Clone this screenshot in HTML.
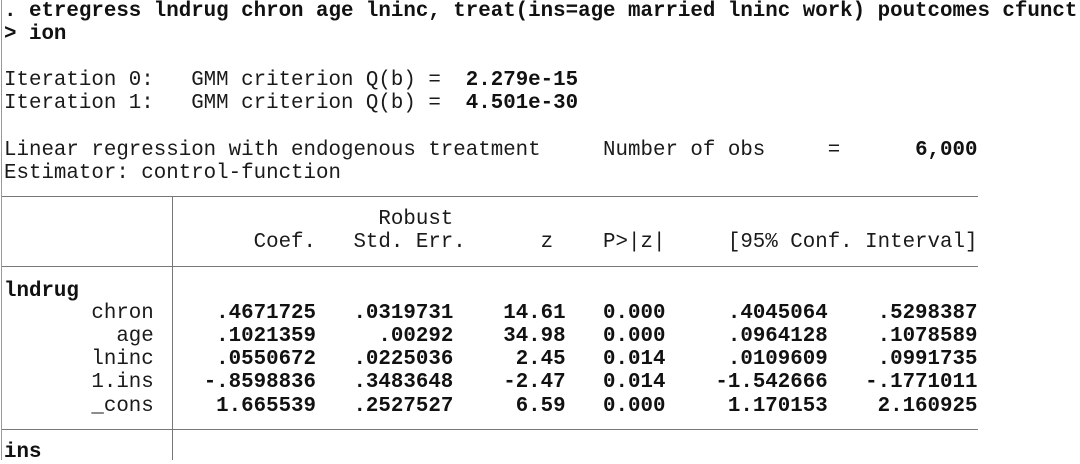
<!DOCTYPE html>
<html><head><meta charset="utf-8"><style>
html,body{margin:0;padding:0;background:#fff;}
body{width:1080px;height:460px;position:relative;overflow:hidden;font-family:"Liberation Mono","Courier New",monospace;font-size:20.8px;color:#1a1a1a;}
.l{position:absolute;left:4px;white-space:pre;line-height:23px;height:23px;}
b{font-weight:bold;color:#111;}
.h{position:absolute;height:1px;background:#777;left:2px;width:976px;}
.v{position:absolute;width:1px;background:#777;}
</style></head><body>
<div class="v" style="left:1px;top:0;height:460px;background:#999"></div>
<div class="l" style="top:0px"><b>. etregress lndrug chron age lninc, treat(ins=age married lninc work) poutcomes cfunct</b></div>
<div class="l" style="top:23px"><b>&gt; ion</b></div>
<div class="l" style="top:69px">Iteration 0:   GMM criterion Q(b) =  <b>2.279e-15</b></div>
<div class="l" style="top:92px">Iteration 1:   GMM criterion Q(b) =  <b>4.501e-30</b></div>
<div class="l" style="top:139px">Linear regression with endogenous treatment     Number of obs     =      <b>6,000</b></div>
<div class="l" style="top:162px">Estimator: control-function</div>
<div class="h" style="top:196px"></div>
<div class="l" style="top:208px">                              Robust</div>
<div class="l" style="top:231px">                    Coef.   Std. Err.      z    P&gt;|z|     [95% Conf. Interval]</div>
<div class="h" style="top:266px"></div>
<div class="l" style="top:280px"><b>lndrug</b></div>
<div class="l" style="top:302px">       chron     <b>.4671725   .0319731    14.61   0.000     .4045064    .5298387</b></div>
<div class="l" style="top:325px">         age     <b>.1021359     .00292    34.98   0.000     .0964128    .1078589</b></div>
<div class="l" style="top:348px">       lninc     <b>.0550672   .0225036     2.45   0.014     .0109609    .0991735</b></div>
<div class="l" style="top:371px">       1.ins    <b>-.8598836   .3483648    -2.47   0.014    -1.542666   -.1771011</b></div>
<div class="l" style="top:395px">       _cons     <b>1.665539   .2527527     6.59   0.000     1.170153    2.160925</b></div>
<div class="h" style="top:429px"></div>
<div class="l" style="top:441px"><b>ins</b></div>
<div class="v" style="left:172px;top:196px;height:264px"></div>
</body></html>
